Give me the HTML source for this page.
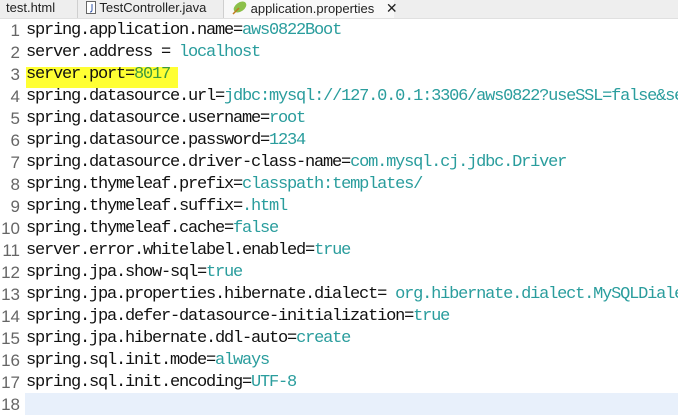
<!DOCTYPE html>
<html><head><style>
body{margin:0;width:678px;height:420px;overflow:hidden;background:#fff;position:relative;font-family:"Liberation Mono",monospace}
.tabs{position:absolute;top:0;left:0;width:678px;height:18px;background:#eeeeee;border-bottom:1px solid #e0e0e0;font-family:"Liberation Sans",sans-serif;font-size:13px;color:#222}
.tab{position:absolute;top:0;height:18px;line-height:16px}
.sep{position:absolute;top:0;width:1px;height:18px;background:#cfcfcf}
.ln{position:absolute;left:0;width:20px;text-align:right;color:#666;font-size:17px;font-family:"Liberation Sans",sans-serif;overflow:hidden}
.code{position:absolute;left:26px;width:652px;overflow:hidden;font-size:17px;letter-spacing:-1.2px;color:#111;white-space:pre}
.v{color:#2a9d9d}
.g{color:#3d9a3d}
</style></head><body>
<div class="tabs">
<div class="tab" style="left:6px">test.html</div>
<div class="sep" style="left:77px"></div>
<div class="tab" style="left:86px"><svg width="10" height="13" style="vertical-align:-2px"><rect x="0.5" y="0.5" width="9" height="12" fill="#fff" stroke="#666"/><path d="M6 3v6q0 2-2 2" stroke="#3355aa" fill="none"/></svg> TestController.java</div>
<div class="sep" style="left:223px"></div>
<div class="tab" style="left:224px;width:170px;background:#f8f8f8"></div>
<div class="tab" style="left:231px"><svg width="16" height="14" style="vertical-align:-2px"><ellipse cx="9" cy="6" rx="7" ry="4.5" transform="rotate(-35 9 6)" fill="#8cc04a"/><path d="M2 13L8 7" stroke="#c07a20" stroke-width="1.5"/></svg> application.properties <span style="margin-left:8px;font-size:14px">✕</span></div>
</div>
<div style="position:absolute;left:26px;top:67px;width:152px;height:21px;background:#ffff33"></div>
<div style="position:absolute;left:25px;top:393px;width:653px;height:22px;background:#e8f0fb"></div>
<div id="L"></div>
<script>
var lines=[
'spring.application.name=<span class="v">aws0822Boot</span>',
'server.address = <span class="v">localhost</span>',
'server.port=<span class="g">8017</span>',
'spring.datasource.url=<span class="v">jdbc:mysql://127.0.0.1:3306/aws0822?useSSL=false&amp;serverTimezone=UTC</span>',
'spring.datasource.username=<span class="v">root</span>',
'spring.datasource.password=<span class="v">1234</span>',
'spring.datasource.driver-class-name=<span class="v">com.mysql.cj.jdbc.Driver</span>',
'spring.thymeleaf.prefix=<span class="v">classpath:templates/</span>',
'spring.thymeleaf.suffix=<span class="v">.html</span>',
'spring.thymeleaf.cache=<span class="v">false</span>',
'server.error.whitelabel.enabled=<span class="v">true</span>',
'spring.jpa.show-sql=<span class="v">true</span>',
'spring.jpa.properties.hibernate.dialect= <span class="v">org.hibernate.dialect.MySQLDialect</span>',
'spring.jpa.defer-datasource-initialization=<span class="v">true</span>',
'spring.jpa.hibernate.ddl-auto=<span class="v">create</span>',
'spring.sql.init.mode=<span class="v">always</span>',
'spring.sql.init.encoding=<span class="v">UTF-8</span>',
''];
var h='';
for(var i=0;i<lines.length;i++){var t=20+i*22;
h+='<div class="ln" style="top:'+t+'px;line-height:22px">'+(i+1)+'</div>';
h+='<div class="code" style="top:'+t+'px;line-height:22px">'+lines[i]+'</div>';}
document.getElementById('L').innerHTML=h;
</script>
</body></html>
